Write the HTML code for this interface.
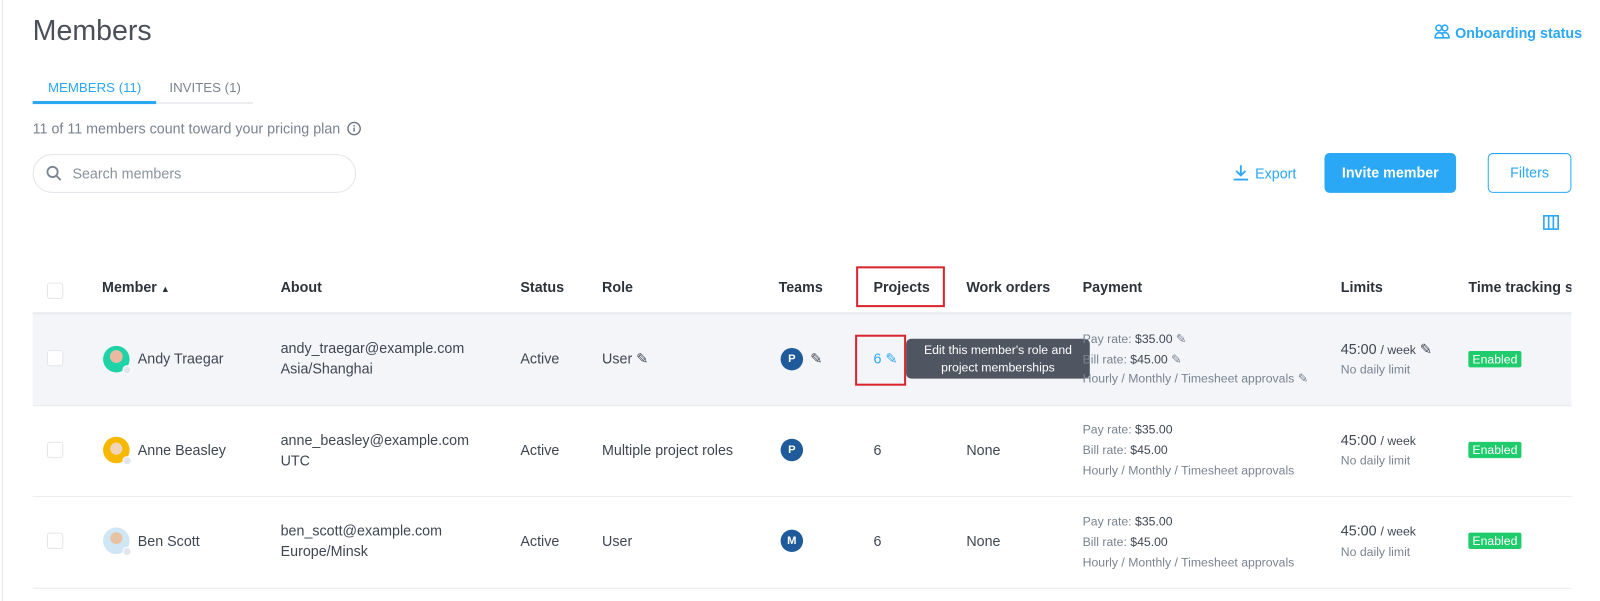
<!DOCTYPE html>
<html><head><meta charset="utf-8"><style>
*{margin:0;padding:0;box-sizing:border-box}
body{width:1600px;height:589px;overflow:hidden;background:#fff;font-family:"Liberation Sans",sans-serif;color:#3f4652;position:relative}
#w{position:absolute;left:0;top:0;width:1568px;height:578px;transform:scale(1.0204);transform-origin:0 0}
.a{position:absolute;white-space:nowrap}
.h{font-size:14px;font-weight:bold;color:#2d323a;top:273px}
.c{font-size:14px;color:#3f4652}
.s{font-size:12px;color:#7a8391}
.blue{color:#2aa7f5}
.cb{width:16px;height:16px;border:1px solid #e3e6ea;border-radius:3px;background:#fff}
.av{width:26px;height:26px;border-radius:50%}
.dot{width:9px;height:9px;border-radius:50%;background:#e1e5ec;border:1.5px solid #fff}
.team{width:22px;height:22px;border-radius:50%;background:#1f5a9a;color:#fff;font-size:11px;font-weight:bold;text-align:center;line-height:22px}
.en{background:#1fcb6b;color:#fff;font-size:12px;padding:1px 4px;border-radius:2px}
.line{position:absolute;left:32px;width:1508px;height:1px;background:#e8ebef}
</style></head><body><div id="w">
<div class="a" style="left:2px;top:0;width:1px;height:589px;background:#e6e8eb"></div>
<div class="a" style="left:32px;top:14px;font-size:28px;color:#4a505a">Members</div>
<div class="a" style="left:1405px;top:23px;font-size:14px;font-weight:bold;color:#2aa7f5"><svg width="16" height="16" viewBox="0 0 16 16" style="vertical-align:-2px;margin-right:5px" fill="none" stroke="#2aa7f5" stroke-width="1.6"><circle cx="5" cy="4.5" r="2.8"/><circle cx="11" cy="4.5" r="2.8"/><path d="M1.5 14c0-3 1.5-5 4-5s4 2 4 5zM8 9.5c.8-.4 1.8-.5 3-.5 2.5 0 4 2 4 5H9.5"/></svg>Onboarding status</div>
<div class="a" style="left:47px;top:78px;font-size:13px;color:#2aa7f5">MEMBERS (11)</div>
<div class="a" style="left:166px;top:78px;font-size:13px;color:#7a8391">INVITES (1)</div>
<div class="a" style="left:32px;top:100px;width:216px;height:2px;background:#eceef1"></div>
<div class="a" style="left:32px;top:99px;width:121px;height:3px;background:#2aa7f5"></div>
<div class="a" style="left:32px;top:118px;font-size:14px;color:#7a8391">11 of 11 members count toward your pricing plan <svg width="14" height="14" viewBox="0 0 14 14" style="vertical-align:-2px;margin-left:3px"><circle cx="7" cy="7" r="6" fill="none" stroke="#6b7380" stroke-width="1.4"/><rect x="6.3" y="6" width="1.4" height="4" fill="#6b7380"/><rect x="6.3" y="3.5" width="1.4" height="1.4" fill="#6b7380"/></svg></div>
<div class="a" style="left:32px;top:151px;width:317px;height:38px;border:1px solid #e1e5ea;border-radius:19px"></div>
<svg class="a" style="left:45px;top:162px" width="16" height="16" viewBox="0 0 16 16" fill="none" stroke="#7a8391" stroke-width="1.8"><circle cx="6.5" cy="6.5" r="5"/><path d="M10.2 10.2L14.5 14.5"/></svg>
<div class="a" style="left:71px;top:162px;font-size:14px;color:#8a929e">Search members</div>
<div class="a" style="left:1208px;top:161px;font-size:14px;color:#2aa7f5"><svg width="16" height="16" viewBox="0 0 16 16" style="vertical-align:-2px;margin-right:6px" fill="none" stroke="#2aa7f5" stroke-width="1.8"><path d="M8 1v10M3.5 6.5L8 11l4.5-4.5M1 15h14"/></svg>Export</div>
<div class="a" style="left:1298px;top:150px;width:129px;height:39px;background:#2aa7f5;border-radius:5px;color:#fff;font-size:14px;font-weight:bold;text-align:center;line-height:39px">Invite member</div>
<div class="a" style="left:1458px;top:150px;width:82px;height:39px;border:1px solid #2aa7f5;border-radius:5px;color:#2aa7f5;font-size:14px;text-align:center;line-height:37px">Filters</div>
<svg class="a" style="left:1512px;top:210px" width="16" height="16" viewBox="0 0 16 16" fill="none" stroke="#2aa7f5" stroke-width="1.6"><rect x="1" y="1.5" width="14" height="13"/><path d="M5.7 1.5v13M10.3 1.5v13"/></svg>

<div class="a cb" style="left:46px;top:277px"></div>
<div class="a h" style="left:100px">Member <span style="font-size:9px">▲</span></div>
<div class="a h" style="left:275px">About</div>
<div class="a h" style="left:510px">Status</div>
<div class="a h" style="left:590px">Role</div>
<div class="a h" style="left:763px">Teams</div>
<div class="a h" style="left:856px">Projects</div>
<div class="a" style="left:839px;top:261px;width:87px;height:40px;border:2px solid #d9272e"></div>
<div class="a h" style="left:947px">Work orders</div>
<div class="a h" style="left:1061px">Payment</div>
<div class="a h" style="left:1314px">Limits</div>
<div class="a h" style="left:1439px;width:101px;overflow:hidden">Time tracking status</div>

<div class="a" style="left:32px;top:306px;width:1508px;height:91px;background:#f3f5f8;border-top:2px solid #e6e9ee"></div>
<div class="line" style="top:397px"></div>
<div class="line" style="top:486px"></div>
<div class="line" style="top:576px"></div>

<div class="a cb" style="left:46px;top:343px"></div>
<div class="a av" style="left:101px;top:339px;background:radial-gradient(circle at 50% 40%,#e9b9a0 0 30%,#1ed3a7 32%)"></div>
<div class="a dot" style="left:120px;top:358px"></div>
<div class="a c" style="left:135px;top:343px">Andy Traegar</div>
<div class="a c" style="left:275px;top:333px">andy_traegar@example.com</div>
<div class="a c" style="left:275px;top:353px">Asia/Shanghai</div>
<div class="a c" style="left:510px;top:343px">Active</div>
<div class="a c" style="left:590px;top:343px">User ✎</div>
<div class="a team" style="left:765px;top:341px">P</div>
<div class="a c" style="left:794px;top:343px">✎</div>
<div class="a" style="left:838px;top:328px;width:50px;height:50px;border:2px solid #d9272e"></div>
<div class="a c blue" style="left:856px;top:343px">6 ✎</div>
<div class="a" style="left:888px;top:332px;width:180px;height:39px;background:#4f5661;border-radius:5px;color:#fff;font-size:12px;text-align:center;line-height:17px;padding-top:3px">Edit this member's role and<br>project memberships</div>
<div class="a s" style="left:1061px;top:325px">Pay rate: <span style="color:#3f4652">$35.00</span> ✎</div>
<div class="a s" style="left:1061px;top:345px">Bill rate: <span style="color:#3f4652">$45.00</span> ✎</div>
<div class="a s" style="left:1061px;top:364px">Hourly / Monthly / Timesheet approvals ✎</div>
<div class="a c" style="left:1314px;top:334px">45:00 <span style="font-size:12px">/ week</span> ✎</div>
<div class="a s" style="left:1314px;top:355px">No daily limit</div>
<div class="a en" style="left:1439px;top:344px">Enabled</div>

<div class="a cb" style="left:46px;top:433px"></div>
<div class="a av" style="left:101px;top:428px;background:radial-gradient(circle at 50% 45%,#f1d3b5 0 30%,#f6b800 32%)"></div>
<div class="a dot" style="left:120px;top:447px"></div>
<div class="a c" style="left:135px;top:433px">Anne Beasley</div>
<div class="a c" style="left:275px;top:423px">anne_beasley@example.com</div>
<div class="a c" style="left:275px;top:443px">UTC</div>
<div class="a c" style="left:510px;top:433px">Active</div>
<div class="a c" style="left:590px;top:433px">Multiple project roles</div>
<div class="a team" style="left:765px;top:430px">P</div>
<div class="a c" style="left:856px;top:433px">6</div>
<div class="a c" style="left:947px;top:433px">None</div>
<div class="a s" style="left:1061px;top:414px">Pay rate: <span style="color:#3f4652">$35.00</span></div>
<div class="a s" style="left:1061px;top:434px">Bill rate: <span style="color:#3f4652">$45.00</span></div>
<div class="a s" style="left:1061px;top:454px">Hourly / Monthly / Timesheet approvals</div>
<div class="a c" style="left:1314px;top:423px">45:00 <span style="font-size:12px">/ week</span></div>
<div class="a s" style="left:1314px;top:444px">No daily limit</div>
<div class="a en" style="left:1439px;top:433px">Enabled</div>

<div class="a cb" style="left:46px;top:522px"></div>
<div class="a av" style="left:101px;top:517px;background:radial-gradient(circle at 50% 40%,#e8c3a3 0 28%,#cfe6f5 30%)"></div>
<div class="a dot" style="left:120px;top:536px"></div>
<div class="a c" style="left:135px;top:522px">Ben Scott</div>
<div class="a c" style="left:275px;top:512px">ben_scott@example.com</div>
<div class="a c" style="left:275px;top:532px">Europe/Minsk</div>
<div class="a c" style="left:510px;top:522px">Active</div>
<div class="a c" style="left:590px;top:522px">User</div>
<div class="a team" style="left:765px;top:519px">M</div>
<div class="a c" style="left:856px;top:522px">6</div>
<div class="a c" style="left:947px;top:522px">None</div>
<div class="a s" style="left:1061px;top:504px">Pay rate: <span style="color:#3f4652">$35.00</span></div>
<div class="a s" style="left:1061px;top:524px">Bill rate: <span style="color:#3f4652">$45.00</span></div>
<div class="a s" style="left:1061px;top:544px">Hourly / Monthly / Timesheet approvals</div>
<div class="a c" style="left:1314px;top:512px">45:00 <span style="font-size:12px">/ week</span></div>
<div class="a s" style="left:1314px;top:534px">No daily limit</div>
<div class="a en" style="left:1439px;top:522px">Enabled</div>
</div></body></html>
